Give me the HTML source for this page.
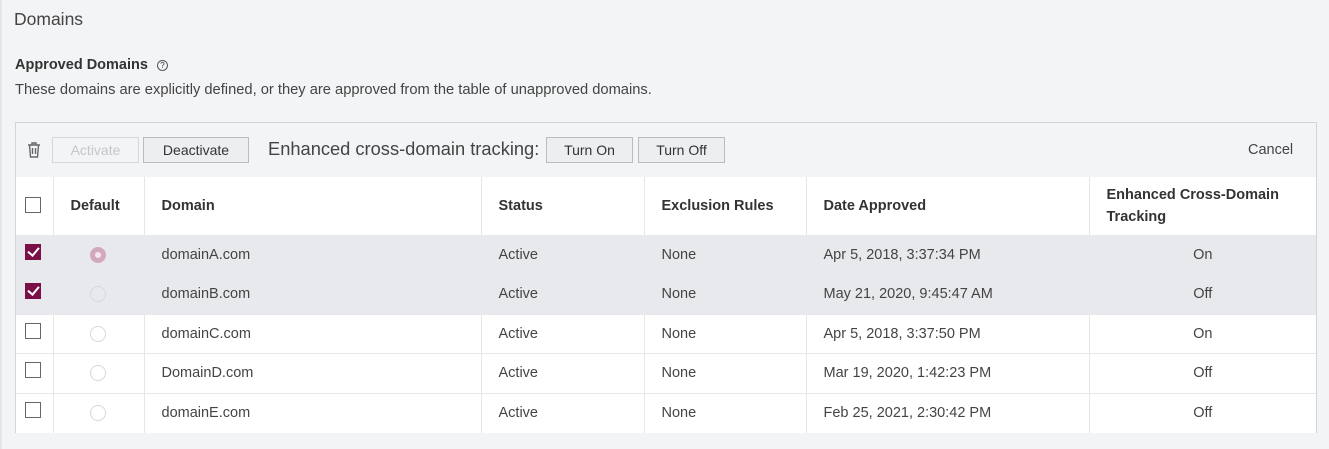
<!DOCTYPE html>
<html><head><style>
*{box-sizing:border-box;margin:0;padding:0}
body{width:1329px;height:449px;background:#f3f4f6;font-family:"Liberation Sans",sans-serif;color:#333;position:relative;overflow:hidden}
body::before{content:"";position:absolute;left:0;top:0;width:2px;height:449px;background:#e4e5e7}
.t{position:absolute;white-space:nowrap}
.box{position:absolute;left:15px;top:122px;width:1302px;height:311px;border:1px solid #d2d4d7;background:#f3f4f6}
.btn{position:absolute;top:14px;height:26px;border:1px solid #b9bcc0;background:#eceef0;font-size:14px;line-height:24px;text-align:center;color:#333}
table{position:absolute;left:0;top:54px;width:1300px;border-collapse:collapse;background:#fff;font-size:14.5px}
td,th{border-left:1px solid #e6e7e9;padding:0 0 0 17px;text-align:left;color:#444}
td:first-child,th:first-child{border-left:none;padding:0 0 0 9px}
th{height:58px;font-weight:bold;color:#333;font-size:14.5px}
td{height:39.5px;border-top:1px solid #e6e7e9}
tr.sel td{background:#e8e9ec;border-top:none}
.cb{display:inline-block;width:16px;height:16px;border:1px solid #666;background:#fff;vertical-align:middle;position:relative;top:-3px}
.cb.on{background:#7b1048;border-color:#7b1048}
.cb.on::after{content:"";position:absolute;left:4px;top:0px;width:5px;height:9px;border:solid #fff;border-width:0 2.5px 2.5px 0;transform:rotate(40deg)}
.rd{display:inline-block;width:16px;height:16px;border-radius:50%;border:1px solid #d7d8da;vertical-align:middle}
.rd.on{background:#d2a9bc;border-color:#d2a9bc;position:relative}
.rd.on::after{content:"";position:absolute;left:4px;top:4px;width:6px;height:6px;border-radius:50%;background:#f3e6ec}
.c{text-align:center;padding-left:0}
</style></head><body>
<div class="t" style="left:14px;top:9px;font-size:17.5px;color:#444">Domains</div>
<div class="t" style="left:15px;top:57px;font-size:14.5px;font-weight:bold;color:#333">Approved Domains <span style="display:inline-block;width:11px;height:11px;border:1px solid #555;border-radius:50%;font-size:8px;line-height:9px;text-align:center;margin-left:5px;font-weight:normal;vertical-align:1px">?</span></div>
<div class="t" style="left:15px;top:82px;font-size:14.7px;color:#444">These domains are explicitly defined, or they are approved from the table of unapproved domains.</div>
<div class="box">
 <svg style="position:absolute;left:11px;top:19px" width="14" height="16" viewBox="0 0 14 16" fill="none" stroke="#666" stroke-width="1.4"><path d="M1 3h12M5 3V1h4v2M2.5 3l1 12h7l1-12M5.5 6v6M8.5 6v6"/></svg>
 <div class="btn" style="left:36px;width:87px;color:#c4c6c9;border-color:#d5d7da;background:#f3f4f6">Activate</div>
 <div class="btn" style="left:127px;width:106px">Deactivate</div>
 <div class="t" style="left:252px;top:15px;font-size:18.3px;color:#444">Enhanced cross-domain tracking:</div>
 <div class="btn" style="left:530px;width:87px">Turn On</div>
 <div class="btn" style="left:622px;width:87px">Turn Off</div>
 <div class="t" style="left:1232px;top:19px;font-size:14.5px;color:#444">Cancel</div>
 <table>
  <tr><th style="width:37px"><span class="cb" style="top:-1px"></span></th><th style="width:91px">Default</th><th style="width:337px">Domain</th><th style="width:163px">Status</th><th style="width:162px">Exclusion Rules</th><th style="width:283px">Date Approved</th><th style="line-height:22px">Enhanced Cross-Domain<br>Tracking</th></tr>
  <tr class="sel"><td><span class="cb on"></span></td><td style="padding:0"><span class="rd on" style="margin-left:36px"></span></td><td>domainA.com</td><td>Active</td><td>None</td><td>Apr 5, 2018, 3:37:34 PM</td><td class="c">On</td></tr>
  <tr class="sel"><td><span class="cb on"></span></td><td style="padding:0"><span class="rd" style="margin-left:36px"></span></td><td>domainB.com</td><td>Active</td><td>None</td><td>May 21, 2020, 9:45:47 AM</td><td class="c">Off</td></tr>
  <tr><td><span class="cb"></span></td><td style="padding:0"><span class="rd" style="margin-left:36px"></span></td><td>domainC.com</td><td>Active</td><td>None</td><td>Apr 5, 2018, 3:37:50 PM</td><td class="c">On</td></tr>
  <tr><td><span class="cb"></span></td><td style="padding:0"><span class="rd" style="margin-left:36px"></span></td><td>DomainD.com</td><td>Active</td><td>None</td><td>Mar 19, 2020, 1:42:23 PM</td><td class="c">Off</td></tr>
  <tr><td><span class="cb"></span></td><td style="padding:0"><span class="rd" style="margin-left:36px"></span></td><td>domainE.com</td><td>Active</td><td>None</td><td>Feb 25, 2021, 2:30:42 PM</td><td class="c">Off</td></tr>
 </table>
</div>
</body></html>
